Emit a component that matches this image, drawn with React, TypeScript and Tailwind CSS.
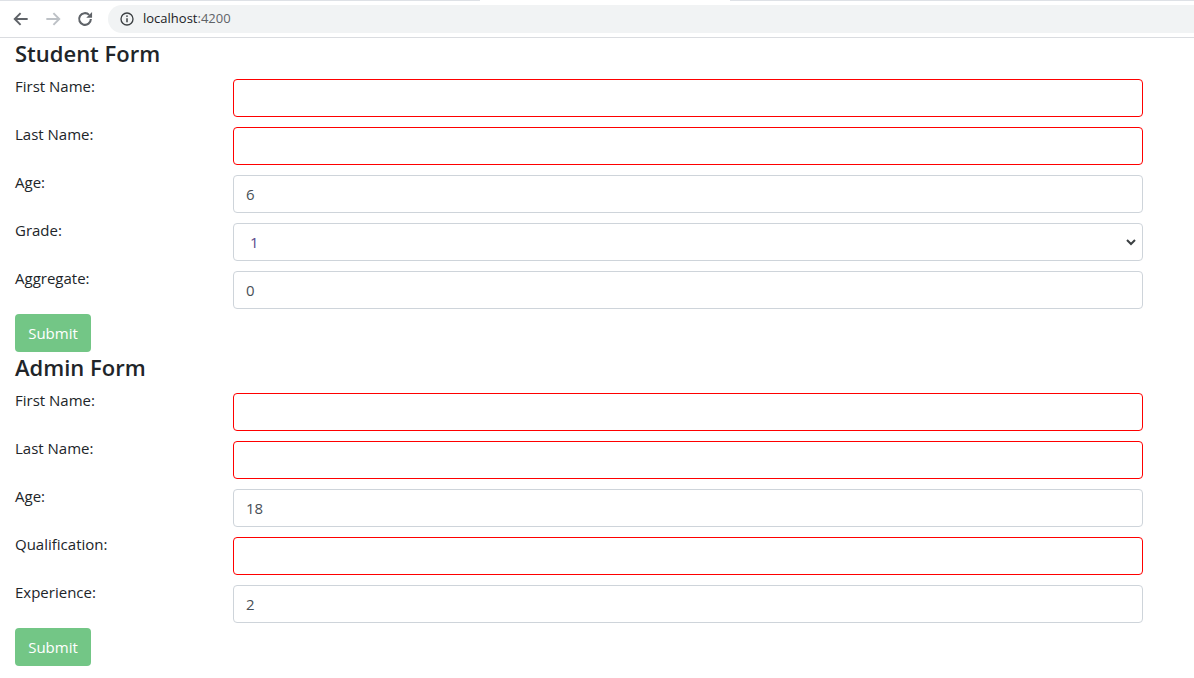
import React from "react";

const font = { fontFamily: '"Open Sans", "Noto Sans", sans-serif' };

function Field({ label, value, invalid }: { label: string; value?: string; invalid?: boolean }) {
  return (
    <div className="flex h-[48px]">
      <div className="w-[218px] text-[15px] leading-[24px] text-[#212529]">{label}</div>
      <input
        readOnly
        value={value ?? ""}
        className={`mt-[5px] h-[38px] w-[910px] rounded-[4px] border bg-white px-[12px] text-[15px] leading-[24px] text-[#495057] outline-none ${
          invalid ? "border-[#ff0000]" : "border-[#ced4da]"
        }`}
      />
    </div>
  );
}

function SelectField({ label, value }: { label: string; value: string }) {
  return (
    <div className="flex h-[48px]">
      <div className="w-[218px] text-[15px] leading-[24px] text-[#212529]">{label}</div>
      <div className="relative mt-[5px] h-[38px] w-[910px]">
        <select
          defaultValue={value}
          className="h-[38px] w-full appearance-none rounded-[4px] border border-[#ced4da] bg-white pl-[16px] text-[15px] text-[#5a4a8a] outline-none"
        >
          <option value="1">1</option>
          <option value="2">2</option>
        </select>
        <svg
          className="pointer-events-none absolute right-[6px] top-[14px]"
          width="12"
          height="10"
          viewBox="0 0 12 10"
        >
          <path d="M2 3 L6 7 L10 3" fill="none" stroke="#3c4043" strokeWidth="2" />
        </svg>
      </div>
    </div>
  );
}

function SubmitButton() {
  return (
    <button className="h-[38px] w-[76px] rounded-[4px] bg-[#73c686] text-[15px] leading-[24px] text-white">
      Submit
    </button>
  );
}

function Heading({ children }: { children: React.ReactNode }) {
  return (
    <div className="h-[36px]">
      <h4 className="pt-[1px] text-[22px] font-semibold leading-[28.8px] text-[#212529]">{children}</h4>
    </div>
  );
}

function BrowserBar() {
  return (
    <div className="relative h-[38px] border-b border-[#dadce0] bg-white">
      <div className="absolute left-0 top-0 h-[1px] w-[480px] bg-[#dee1e6]" />
      <div className="absolute right-0 top-0 h-[1px] w-[464px] bg-[#dee1e6]" />
      <div className="flex h-[37px] items-center">
        <div className="flex w-[108px] items-center pl-[11px]">
          <svg width="20" height="20" viewBox="0 0 24 24" className="mr-[12px]">
            <path d="M20 12H5M11.5 5l-7 7 7 7" fill="none" stroke="#5f6368" strokeWidth="2.3" />
          </svg>
          <svg width="20" height="20" viewBox="0 0 24 24" className="mr-[12px]">
            <path d="M4 12h15M12.5 5l7 7-7 7" fill="none" stroke="#bdc1c6" strokeWidth="2.3" />
          </svg>
          <svg width="20" height="20" viewBox="0 0 24 24">
            <path
              d="M19 12a7 7 0 1 1-2.05-4.95"
              fill="none"
              stroke="#5f6368"
              strokeWidth="2.5"
            />
            <path d="M20.5 3.5v7h-7z" fill="#5f6368" />
          </svg>
        </div>
        <div className="flex h-[28px] flex-1 items-center rounded-l-full bg-[#f1f3f4] pl-[11px]">
          <svg width="16" height="16" viewBox="0 0 24 24" className="mr-[8px]">
            <circle cx="12" cy="12" r="9" fill="none" stroke="#3c4043" strokeWidth="2" />
            <path d="M12 11v6" stroke="#3c4043" strokeWidth="2.2" />
            <circle cx="12" cy="7.6" r="1.3" fill="#3c4043" />
          </svg>
          <span className="text-[13px] text-[#202124]" style={font}>
            localhost<span className="text-[#5f6368]">:4200</span>
          </span>
        </div>
      </div>
    </div>
  );
}

export default function App() {
  return (
    <div className="min-h-[678px] w-[1194px] overflow-hidden bg-white" style={font}>
      <BrowserBar />
      <div className="px-[15px]">
        <Heading>Student Form</Heading>
        <Field label="First Name:" invalid />
        <Field label="Last Name:" invalid />
        <Field label="Age:" value="6" />
        <SelectField label="Grade:" value="1" />
        <Field label="Aggregate:" value="0" />
        <SubmitButton />
        <Heading>Admin Form</Heading>
        <Field label="First Name:" invalid />
        <Field label="Last Name:" invalid />
        <Field label="Age:" value="18" />
        <Field label="Qualification:" invalid />
        <Field label="Experience:" value="2" />
        <SubmitButton />
      </div>
    </div>
  );
}
